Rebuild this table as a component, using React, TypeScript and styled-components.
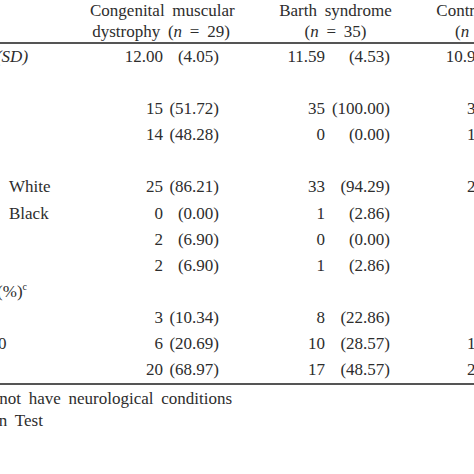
import React from "react";
import styled, { createGlobalStyle } from "styled-components";

const GlobalStyle = createGlobalStyle`
  html, body {
    margin: 0;
    padding: 0;
    background: #fff;
    overflow: hidden;
  }
`;

// column content areas (lead = left padding, head = left padding of the heading,
// trail = right padding, pct = width of the % part)
const COLS = [
  { lead: 0, head: 0, trail: 13, pct: 56 },
  { lead: 46, head: 46, trail: 3, pct: 65 },
  { lead: 35, head: 41, trail: 0, pct: 54 },
];

const GRID = "210px 142px 161px 145px";

const Page = styled.div`
  margin-left: -120px;
  width: 700px;
  font-family: "Liberation Serif", "Times New Roman", serif;
  font-size: 17px;
  color: #2d2d2d;
  word-spacing: 3.5px;
`;

const Table = styled.div`
  width: 658px;
  border-bottom: 2px solid #555;
`;

const HeadRow = styled.div`
  display: grid;
  grid-template-columns: ${GRID};
  height: 42px;
  border-bottom: 2px solid #555;
  line-height: 21px;
`;

const HeadCell = styled.div<{ $lead: number }>`
  padding-left: ${(p) => p.$lead}px;
  text-align: center;
  white-space: nowrap;
`;

const Body = styled.div`
  display: flex;
  flex-direction: column;
`;

const DataRow = styled.div`
  display: grid;
  grid-template-columns: ${GRID};
  height: 26.1px;
  line-height: 26.1px;
`;

const Label = styled.div<{ $indent: number }>`
  padding-left: ${(p) => p.$indent}px;
  white-space: nowrap;
`;

const Value = styled.div<{ $lead: number; $trail: number }>`
  display: flex;
  justify-content: flex-end;
  padding-left: ${(p) => p.$lead}px;
  padding-right: ${(p) => p.$trail}px;
  white-space: nowrap;
`;

const Count = styled.span`
  flex: 1;
  text-align: right;
`;

const Pct = styled.span<{ $w: number }>`
  flex: none;
  width: ${(p) => p.$w}px;
  text-align: right;
`;

const Em = styled.i`
  font-style: italic;
`;

const Sup = styled.sup`
  font-size: 10px;
  line-height: 0;
  vertical-align: 7px;
`;

const Notes = styled.div`
  margin-top: 3px;
  line-height: 22px;
`;

const Note = styled.div<{ $indent: number }>`
  padding-left: ${(p) => p.$indent}px;
  white-space: nowrap;
`;

type Val = { n: string; p?: string } | null;

type Row = {
  label?: React.ReactNode;
  indent: number;
  values: [Val, Val, Val];
};

const rows: Row[] = [
  {
    label: (
      <>
        Age, years <Em>(SD)</Em>
      </>
    ),
    indent: 32,
    values: [
      { n: "12.00", p: "(4.05)" },
      { n: "11.59", p: "(4.53)" },
      { n: "10.96", p: "(3.87)" },
    ],
  },
  { label: "Sex, n (%)", indent: 32, values: [null, null, null] },
  {
    label: "Male",
    indent: 42,
    values: [
      { n: "15", p: "(51.72)" },
      { n: "35", p: "(100.00)" },
      { n: "31", p: "(75.61)" },
    ],
  },
  {
    label: "Female",
    indent: 42,
    values: [
      { n: "14", p: "(48.28)" },
      { n: "0", p: "(0.00)" },
      { n: "10", p: "(24.39)" },
    ],
  },
  { label: "Race (%)", indent: 32, values: [null, null, null] },
  {
    label: "White",
    indent: 129,
    values: [
      { n: "25", p: "(86.21)" },
      { n: "33", p: "(94.29)" },
      { n: "29", p: "(70.73)" },
    ],
  },
  {
    label: "Black",
    indent: 129,
    values: [
      { n: "0", p: "(0.00)" },
      { n: "1", p: "(2.86)" },
      { n: "6", p: "(14.63)" },
    ],
  },
  {
    label: "Asian",
    indent: 42,
    values: [
      { n: "2", p: "(6.90)" },
      { n: "0", p: "(0.00)" },
      { n: "4", p: "(9.76)" },
    ],
  },
  {
    label: "Other",
    indent: 42,
    values: [
      { n: "2", p: "(6.90)" },
      { n: "1", p: "(2.86)" },
      { n: "2", p: "(4.88)" },
    ],
  },
  {
    label: (
      <>
        Full IQ, N (%)<Sup>c</Sup>
      </>
    ),
    indent: 32,
    values: [null, null, null],
  },
  {
    label: "< 70",
    indent: 84,
    values: [
      { n: "3", p: "(10.34)" },
      { n: "8", p: "(22.86)" },
      { n: "0", p: "(0.00)" },
    ],
  },
  {
    label: "70–90",
    indent: 84,
    values: [
      { n: "6", p: "(20.69)" },
      { n: "10", p: "(28.57)" },
      { n: "13", p: "(31.71)" },
    ],
  },
  {
    label: "> 90",
    indent: 84,
    values: [
      { n: "20", p: "(68.97)" },
      { n: "17", p: "(48.57)" },
      { n: "28", p: "(68.29)" },
    ],
  },
];

const App = () => {
  return (
    <>
      <GlobalStyle />
      <Page>
        <Table>
          <HeadRow>
            <HeadCell $lead={0} />
            <HeadCell $lead={COLS[0].head}>
              Congenital muscular
              <br />
              dystrophy (<Em>n</Em> = 29)
            </HeadCell>
            <HeadCell $lead={COLS[1].head}>
              Barth syndrome
              <br />(<Em>n</Em> = 35)
            </HeadCell>
            <HeadCell $lead={COLS[2].head}>
              Control group
              <br />(<Em>n</Em> = 41)
            </HeadCell>
          </HeadRow>
          <Body>
            {rows.map((row, i) => (
              <DataRow key={i}>
                <Label $indent={row.indent}>{row.label}</Label>
                {row.values.map((v, j) => (
                  <Value key={j} $lead={COLS[j].lead} $trail={COLS[j].trail}>
                    {v && (
                      <>
                        <Count>{v.n}</Count>
                        <Pct $w={COLS[j].pct}>{v.p}</Pct>
                      </>
                    )}
                  </Value>
                ))}
              </DataRow>
            ))}
          </Body>
        </Table>
        <Notes>
          <Note $indent={19}>
            <Sup>a</Sup>Controls did not have neurological conditions
          </Note>
          <Note $indent={56}>
            <Sup>b</Sup>Wilcoxon Test
          </Note>
        </Notes>
      </Page>
    </>
  );
};

export default App;
